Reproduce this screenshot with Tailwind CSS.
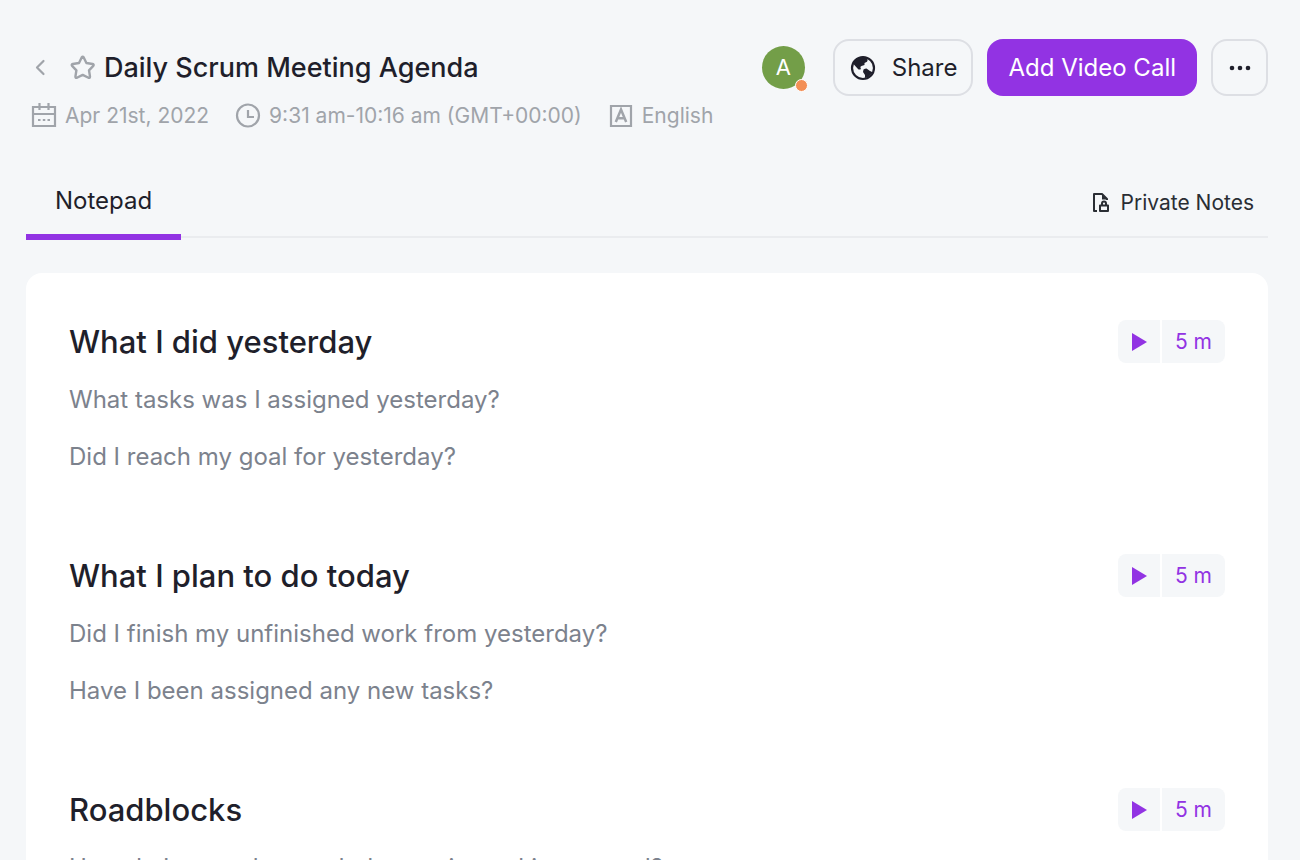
<!DOCTYPE html>
<html lang="en">
<head>
<meta charset="utf-8">
<title>Daily Scrum Meeting Agenda</title>
<script src="https://cdn.jsdelivr.net/npm/@tailwindcss/browser@4"></script>
</head>
<body class="h-screen overflow-hidden bg-[#f5f7f9] px-[26px] pt-[39px] font-['Inter',sans-serif] text-[#1f1f2b]">
<div class="pr-[6px]">
  <header class="flex items-start justify-between whitespace-nowrap">
    <div class="pl-[5px]">
      <div class="flex h-[57px] items-center">
        <button aria-label="Back" class="flex w-5 justify-center text-[#a0a4aa]">
          <svg width="12" height="18" viewBox="0 0 12 18" fill="none" stroke="currentColor" stroke-width="2.200" stroke-linecap="round" stroke-linejoin="round"><path d="M8.500 2 2 8.500 8.500 15"/></svg>
        </button>
        <button aria-label="Add to favourites" class="ml-[18px] text-[#a0a4aa]">
          <svg width="26" height="26" viewBox="0 0 26 26" fill="none" stroke="currentColor" stroke-width="2.400" stroke-linejoin="round"><path d="M12.800 2.300Q13.700 1 14.600 2.300L17.400 8 23.600 9Q25.200 9.500 24.300 10.800L20 15.300 21 21.600Q21 23.200 19.500 22.800L13.700 19.900 7.900 22.800Q6.400 23.200 6.400 21.600L7.400 15.300 3.100 10.800Q2.200 9.500 3.800 9L10 8Z"/></svg>
        </button>
        <h1 class="ml-[9px] text-[27px] leading-8 font-medium">Daily Scrum Meeting Agenda</h1>
      </div>
      <div class="flex items-center text-[21px] leading-10 text-[#a0a4aa]">
        <svg width="26" height="26" viewBox="0 0 26 26" fill="none" stroke="currentColor" stroke-width="2.200"><path d="M2 4h22v19H2zM2 11h22M8.500 0v7M17.500 0v7"/><path d="M7 17h2.500M11.800 17h2.500M16.500 17h2.500"/></svg>
        <span class="ml-2">Apr 21st, 2022</span>
        <svg class="ml-[26px]" width="26" height="26" viewBox="0 0 26 26" fill="none" stroke="currentColor" stroke-width="2.200"><circle cx="13" cy="12.500" r="11"/><path d="M13 7v7h6"/></svg>
        <span class="ml-2">9:31 am-10:16 am (GMT+00:00)</span>
        <svg class="ml-[26px]" width="26" height="26" viewBox="0 0 26 26" fill="none" stroke="currentColor" stroke-width="2.200"><path d="M3 3h20v20H3z"/><path d="M7.800 19 13 6.500 18.200 19M9.500 15.200h7" stroke-width="2.500"/></svg>
        <span class="ml-2">English</span>
      </div>
    </div>
    <div class="flex h-[57px] items-center">
      <div class="relative mr-7 flex size-[43px] items-center justify-center rounded-full bg-[#739e48] text-[22px] text-white">A<span class="absolute -right-[3px] -bottom-[3px] size-[13px] rounded-full border border-white bg-[#f38f56]"></span></div>
      <button class="flex h-full items-center gap-[15px] rounded-2xl border-2 border-[#dddfe4] px-[14px] text-[24px]">
        <svg width="28" height="28" viewBox="0 0 28 28"><circle cx="14" cy="14" r="11" fill="none" stroke="currentColor" stroke-width="2.200"/><path fill="currentColor" d="M8.500 4 14 2.500l4.500 1.500v2.500Q18.500 8 16.500 8.500L15.500 9v2l-3 1q-1.500.500-1 2l.500 1q-2 1-3 0L4 9.500ZM14.500 15.500q1.500-1 3-1l3.500 2.500q2 .500 2.500 1.500L20 22.500 16 24v-3l-2-3Z"/></svg>
        Share
      </button>
      <button class="ml-[14px] h-full rounded-2xl bg-[#9233e3] px-[21px] text-[24px] text-white">Add Video Call</button>
      <button aria-label="More options" class="ml-[14px] flex h-full w-[57px] items-center justify-center rounded-2xl border-2 border-[#dddfe4]">
        <svg width="24" height="6" viewBox="0 0 24 6" fill="currentColor"><circle cx="4" cy="3" r="2.300"/><circle cx="12" cy="3" r="2.300"/><circle cx="20" cy="3" r="2.300"/></svg>
      </button>
    </div>
  </header>

  <nav class="mt-[24px] flex h-[78px] items-end justify-between border-b-2 border-[#eaecef]">
    <a href="#notepad" class="relative px-[29px] pb-[19px] text-[24px] leading-8 after:absolute after:inset-x-0 after:-bottom-1 after:h-[6px] after:bg-[#9233e3]">Notepad</a>
    <a href="#private" class="flex items-center gap-2 pr-[14px] pb-[17px] text-[21px] leading-8 text-[#2a2e34]">
      <svg width="22" height="22" viewBox="0 0 22 22" fill="none" stroke="currentColor" stroke-width="2" stroke-linejoin="round"><path d="M6 19H3V2h8l5 5v1"/><path d="M11 2v5.500h5.500Z" fill="currentColor" stroke="none"/><path d="M9 13.500h8V19H9zM11 13.500v-2a2 2 0 0 1 4 0v2"/></svg>
      Private Notes
    </a>
  </nav>

  <main class="mt-[35px] rounded-t-2xl bg-white px-[43px] pt-[47px]">
    <section class="mb-[69px]">
      <div class="flex items-center justify-between">
        <h2 class="text-[31px] leading-[43px] font-medium">What I did yesterday</h2>
        <div class="flex h-[43px] gap-[2px] text-[#9233e3]">
          <button aria-label="Start timer" class="flex w-[42px] items-center justify-center rounded-l-lg bg-[#f5f7f9]"><svg width="16" height="20" viewBox="0 0 16 20" fill="currentColor"><path d="M1 1v18l15-9Z"/></svg></button>
          <button class="rounded-r-lg bg-[#f5f7f9] px-[13px] text-[21px]">5 m</button>
        </div>
      </div>
      <p class="mt-2 text-[24px] leading-[57px] text-[#7c828d]">What tasks was I assigned yesterday?</p>
      <p class="text-[24px] leading-[57px] text-[#7c828d]">Did I reach my goal for yesterday?</p>
    </section>
    <section class="mb-[69px]">
      <div class="flex items-center justify-between">
        <h2 class="text-[31px] leading-[43px] font-medium">What I plan to do today</h2>
        <div class="flex h-[43px] gap-[2px] text-[#9233e3]">
          <button aria-label="Start timer" class="flex w-[42px] items-center justify-center rounded-l-lg bg-[#f5f7f9]"><svg width="16" height="20" viewBox="0 0 16 20" fill="currentColor"><path d="M1 1v18l15-9Z"/></svg></button>
          <button class="rounded-r-lg bg-[#f5f7f9] px-[13px] text-[21px]">5 m</button>
        </div>
      </div>
      <p class="mt-2 text-[24px] leading-[57px] text-[#7c828d]">Did I finish my unfinished work from yesterday?</p>
      <p class="text-[24px] leading-[57px] text-[#7c828d]">Have I been assigned any new tasks?</p>
    </section>
    <section>
      <div class="flex items-center justify-between">
        <h2 class="text-[31px] leading-[43px] font-medium">Roadblocks</h2>
        <div class="flex h-[43px] gap-[2px] text-[#9233e3]">
          <button aria-label="Start timer" class="flex w-[42px] items-center justify-center rounded-l-lg bg-[#f5f7f9]"><svg width="16" height="20" viewBox="0 0 16 20" fill="currentColor"><path d="M1 1v18l15-9Z"/></svg></button>
          <button class="rounded-r-lg bg-[#f5f7f9] px-[13px] text-[21px]">5 m</button>
        </div>
      </div>
      <p class="mt-2 text-[24px] leading-[57px] text-[#7c828d]">How do I move the needed steps in working toward?</p>
    </section>
  </main>
</div>
</body>
</html>
